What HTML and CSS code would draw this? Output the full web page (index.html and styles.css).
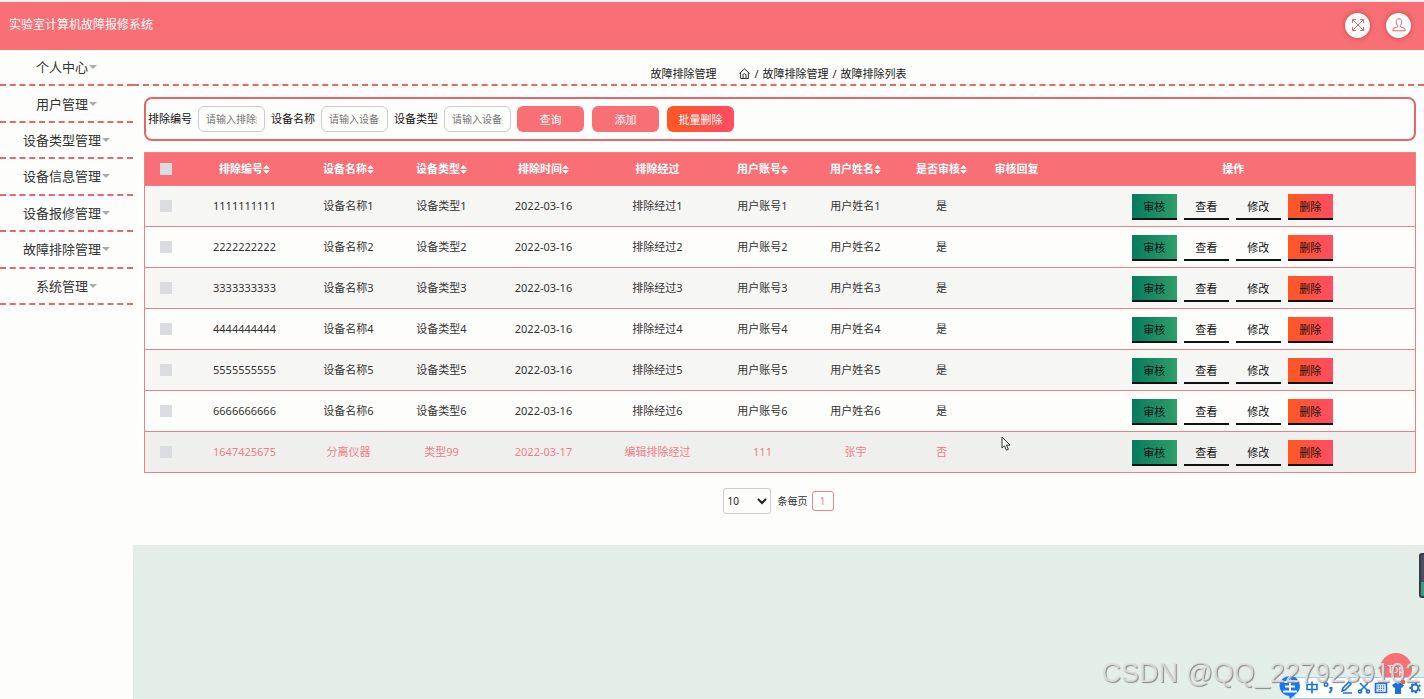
FILE: index.html
```html
<!DOCTYPE html>
<html lang="zh-CN">

<head>
    <meta charset="UTF-8">
    <meta name="viewport" content="width=device-width, initial-scale=1.0">
    <title>实验室计算机故障报修系统</title>
    <link rel="stylesheet" href="styles.css">
</head>

<body>

    <!-- Top bar -->
    <header class="header">
        <h1 class="logo">实验室计算机故障报修系统</h1>
        <div class="header-actions">
            <button class="round-button" aria-label="全屏">
                <svg width="12" height="12" viewBox="0 0 12 12">
                    <path d="M1 1l10 10M11 1L1 11M.5 4V.5H4M8 .5h3.500V4M.5 8v3.500H4M8 11.500h3.500V8" />
                </svg>
            </button>
            <button class="round-button" aria-label="用户">
                <svg width="14" height="14" viewBox="0 0 14 14">
                    <path d="M7 .8C5 .8 4.200 2 4.200 3.900c0 1.700.7 3.100 1.600 3.700v1.200L2 10.200C1.200 10.600.8 11.400.8 12.800h12.400c0-1.400-.4-2.200-1.200-2.600L8.200 8.800V7.600c.9-.6 1.600-2 1.600-3.700C9.800 2 9 .8 7 .8z" />
                </svg>
            </button>
        </div>
    </header>

    <div class="layout">
        <!-- Side menu -->
        <aside class="sidebar">
            <nav class="menu">
                <a class="menu-item" href="#">个人中心<span class="caret"></span></a>
                <a class="menu-item" href="#">用户管理<span class="caret"></span></a>
                <a class="menu-item" href="#">设备类型管理<span class="caret"></span></a>
                <a class="menu-item" href="#">设备信息管理<span class="caret"></span></a>
                <a class="menu-item" href="#">设备报修管理<span class="caret"></span></a>
                <a class="menu-item" href="#">故障排除管理<span class="caret"></span></a>
                <a class="menu-item" href="#">系统管理<span class="caret"></span></a>
            </nav>
        </aside>

        <main class="content">
            <div class="breadcrumb">
                <span class="breadcrumb-title">故障排除管理</span>
                <a class="home" href="#" aria-label="首页">
                    <svg width="11" height="11" viewBox="0 0 11 11">
                        <path d="M.5 5.500L5.500.9l5 4.600M1.600 4.700v5.800h7.800V4.700M4 10.500V6.800C4 5.400 7 5.400 7 6.800v3.700" />
                    </svg>
                </a>
                <span>/</span>
                <span>故障排除管理</span>
                <span>/</span>
                <span>故障排除列表</span>
            </div>

            <div class="panel">
                <!-- Search form -->
                <form class="filter">
                    <label for="code">排除编号</label>
                    <input class="filter-input" type="text" id="code" placeholder="请输入排除编号">
                    <label for="name">设备名称</label>
                    <input class="filter-input" type="text" id="name" placeholder="请输入设备名称">
                    <label for="type">设备类型</label>
                    <input class="filter-input" type="text" id="type" placeholder="请输入设备类型">
                    <div class="filter-buttons">
                        <button class="filter-button" type="button">查询</button>
                        <button class="filter-button" type="button">添加</button>
                        <button class="filter-button danger" type="button">批量删除</button>
                    </div>
                </form>

                <table class="table">
                    <thead>
                        <tr>
                            <th class="col-check"><input class="check" type="checkbox" aria-label="全选"></th>
                            <th class="col-code sort">排除编号</th>
                            <th class="col-name sort">设备名称</th>
                            <th class="col-type sort">设备类型</th>
                            <th class="col-date sort">排除时间</th>
                            <th class="col-note">排除经过</th>
                            <th class="col-account sort">用户账号</th>
                            <th class="col-user sort">用户姓名</th>
                            <th class="col-audit sort">是否审核</th>
                            <th class="col-reply">审核回复</th>
                            <th>操作</th>
                        </tr>
                    </thead>
                    <tbody id="rows"></tbody>
                </table>

                <!-- Pagination -->
                <div class="pager">
                    <select class="page-size" id="page-size">
                        <option>10</option>
                        <option>20</option>
                        <option>50</option>
                    </select>
                    <label for="page-size">条每页</label>
                    <button class="page-number">1</button>
                </div>
            </div>
        </main>
    </div>

    <button class="top-button">Top</button>

    <!-- Input method bar -->
    <div class="ime">
        <svg width="146" height="26" viewBox="0 0 146 26">
            <path fill="#fcfdff" stroke="#a9cbe8" d="M16 2.500H147V23.500H16z" />
            <path fill="#1677f8" d="M12 1a10 10 0 0 1 7 17l-7 6-1-3A10 10 0 0 1 12 1z" />
            <g fill="none" stroke="#1a70dc" stroke-width="1.600">
                <path stroke="#fff" stroke-width="2" d="M6 7h12M7 11.500h10M5 16.500h14M12 7v9M11 4l2 2" />
                <path d="M29 9.500h10v5H29zM34 6.500v12" />
                <circle cx="48" cy="9.500" r="1.700" />
                <path d="M51.500 13H53.500v2l-2 3" stroke-width="2" />
                <path d="M64 16l1-3 6-6 2 2-6 6zM65 18h9" />
                <path d="M82 8l8 8M90 8l-8 8" />
                <circle cx="82" cy="16.500" r="1.500" />
                <circle cx="90" cy="16.500" r="1.500" />
                <path d="M97.500 8.500h11v9h-11z" />
                <path stroke-dasharray="1.200 1" d="M98.500 11h9M98.500 13.200h9M100.500 15.500h5" />
                <circle cx="137" cy="13" r="3.400" stroke-width="2" />
                <path stroke-width="2" stroke-dasharray="2 2.400" d="M137 8l4.500 2.500v5L137 18l-4.500-2.500v-5z" />
            </g>
            <path fill="#1a70dc" d="M114 10l4-2.500c1 1.500 3 1.500 4 0l4 2.500-2 3-1-.5V19h-6v-6.500l-1 .5z" />
            <circle cx="125" cy="7" r="2.300" fill="#ff5a2b" />
        </svg>
    </div>
    <div class="watermark">CSDN @QQ_2279239102</div>
    <div class="side-tab"></div>
    <svg class="cursor" width="10" height="16" viewBox="0 0 10 16">
        <path d="M1 1v11l2.500-2.200 2 4.400 1.900-.9-2-4.200H9z" />
    </svg>

    <script src="script.js"></script>
</body>

</html>
```

FILE: styles.css
```css
/* Resetting default margin and padding for all elements */
* {
    margin: 0;
    padding: 0;
    box-sizing: border-box;
}

body {
    min-height: 100vh;
    display: flex;
    flex-direction: column;
    background: #fdfdfb;
    color: #333;
    font-family: "Noto Sans", "Noto Sans CJK SC", sans-serif;
    font-size: 11px;
    line-height: 16px;
    overflow: hidden;
}

button,
input,
select {
    font-family: inherit;
    font-size: 11px;
}

button {
    border: none;
    cursor: pointer;
}

a {
    color: inherit;
    text-decoration: none;
}

/* Top bar */
.header {
    display: flex;
    justify-content: space-between;
    align-items: center;
    height: 50px;
    padding: 0 13px 2px 9px;
    border-top: 2px solid #fdf3f1;
    background: #f86f75;
}

.logo {
    color: #fff;
    font-size: 12px;
    font-weight: normal;
}

.header-actions {
    display: flex;
    gap: 16px;
}

.round-button {
    display: flex;
    justify-content: center;
    align-items: center;
    width: 25px;
    height: 25px;
    border-radius: 50%;
    background: #fdfdfb;
    box-shadow: 0 0 5px rgba(120, 40, 40, 0.5);
}

.round-button svg {
    fill: none;
    stroke: #e0656a;
}

.layout {
    flex: 1;
    display: flex;
}

/* Side menu */
.sidebar {
    width: 133px;
}

.menu {
    display: flex;
    flex-direction: column;
    height: 255px;
}

.menu-item {
    flex: 1;
    display: flex;
    justify-content: center;
    align-items: center;
    gap: 1px;
    border-bottom: 2px dashed #e8676c;
    font-size: 13px;
}

.caret {
    border: 4px solid transparent;
    border-top-color: #aaa;
    border-bottom: none;
}

/* Main area */
.content {
    flex: 1;
    min-width: 0;
    background: #e3eee8;
}

.breadcrumb {
    display: flex;
    justify-content: center;
    align-items: flex-end;
    gap: 4px;
    height: 36px;
    padding-bottom: 2px;
    border-bottom: 2px dashed #e8676c;
    background: #fdfdfb;
    color: #222;
}

.breadcrumb-title {
    margin-right: 19px;
}

.home {
    display: flex;
    margin-bottom: 3px;
}

.home svg {
    fill: none;
    stroke: #333;
}

.panel {
    padding: 11px 8px 31px 11px;
    background: #fdfdfb;
}

/* Search form */
.filter {
    display: flex;
    align-items: center;
    gap: 6px;
    height: 44px;
    margin-bottom: 11px;
    padding: 0 2px;
    border: 2px solid #e2666b;
    border-radius: 8px;
    color: #111;
}

.filter-input {
    width: 67px;
    height: 26px;
    padding: 0 7px;
    border: 1px solid #ccc;
    border-radius: 6px;
    background: #fdfdfb;
    font-size: 10px;
}

.filter-input::placeholder {
    color: #757575;
}

.filter-buttons {
    display: flex;
    gap: 8px;
}

.filter-button {
    width: 67px;
    height: 26px;
    border-radius: 6px;
    background: #f86f75;
    color: #fff;
}

.danger {
    background: linear-gradient(90deg, #ff5722, #ff4d63);
}

/* Data table */
.table {
    width: 100%;
    table-layout: fixed;
    border-collapse: collapse;
    border: 1px solid #e88286;
    text-align: center;
}

.table th {
    height: 33px;
    background: #f86f75;
    color: #fff;
}

.table td {
    height: 41px;
    border-top: 1px solid #e88286;
}

.table tbody tr:nth-child(odd) {
    background: #f6f6f5;
}

.table tbody tr.active {
    background: #efefee;
    color: #f08085;
}

.col-check {
    width: 43px;
}

.col-code {
    width: 114px;
}

.col-name,
.col-account {
    width: 94px;
}

.col-type,
.col-user {
    width: 92px;
}

.col-date {
    width: 112px;
}

.col-note {
    width: 116px;
}

.col-audit {
    width: 80px;
}

.col-reply {
    width: 70px;
}

/* Sort arrows after the column name */
.sort::after {
    content: "";
    display: inline-block;
    width: 7px;
    height: 9px;
    vertical-align: -1px;
    background: #fff;
    clip-path: polygon(50% 0, 100% 42%, 0 42%, 0 58%, 100% 58%, 50% 100%, 0 58%, 0 42%);
}

.check {
    appearance: none;
    display: block;
    width: 12px;
    height: 12px;
    margin: 0 auto;
    background: #dadcdf;
}

.row-actions {
    display: flex;
    justify-content: center;
    gap: 7px;
    padding: 1px 2px 0 0;
}

.row-button {
    width: 45px;
    height: 26px;
    border-bottom: 2px solid #111;
    background: none;
    color: #111;
}

.row-button.audit {
    background: linear-gradient(90deg, #067a5b, #2f9e6c);
}

.row-button.danger {
    background: linear-gradient(90deg, #ff5722, #ff4d63);
}

/* Pagination */
.pager {
    display: flex;
    justify-content: center;
    align-items: center;
    margin-top: 15px;
    padding-right: 4px;
    font-size: 10px;
}

.page-size {
    width: 48px;
    height: 26px;
    margin-right: 7px;
    border: 1px solid #ccc;
    border-radius: 3px;
    background: #fdfdfb;
    color: #222;
    font-size: 10px;
}

.page-number {
    width: 22px;
    height: 20px;
    margin-left: 4px;
    border: 1px solid #ec868a;
    border-radius: 3px;
    background: #fdfdfb;
    color: #f08085;
    font-size: 10px;
}

/* Floating items */
.top-button {
    position: fixed;
    right: 12px;
    bottom: 14px;
    width: 32px;
    height: 32px;
    border-radius: 50%;
    background: #f86f75;
    color: #fff;
    font-size: 10px;
}

.ime {
    position: fixed;
    right: 0;
    bottom: -2px;
    height: 26px;
}

.watermark {
    position: fixed;
    right: 4px;
    bottom: 10px;
    color: rgba(225, 225, 225, 0.85);
    font-family: "Liberation Sans", sans-serif;
    font-size: 27px;
    line-height: 32px;
    text-shadow: 1px 1px 1px #888;
    pointer-events: none;
}

.side-tab {
    position: fixed;
    right: 0;
    top: 553px;
    width: 5px;
    height: 45px;
    border: 2px solid #333b48;
    border-right: none;
    border-radius: 3px 0 0 3px;
    background: linear-gradient(#4b505a 65%, #3f9c7c 65%);
}

.cursor {
    position: fixed;
    left: 1001px;
    top: 436px;
    fill: #fff;
    stroke: #333;
}
```

FILE: script.js
```javascript
// Table data: code, device name, device type, date, note, account, user, audited
const rows = [];
for (let i = 1; i <= 6; i++) {
    rows.push([String(i).repeat(10), '设备名称' + i, '设备类型' + i, '2022-03-16', '排除经过' + i, '用户账号' + i, '用户姓名' + i, '是']);
}
rows.push(['1647425675', '分离仪器', '类型99', '2022-03-17', '编辑排除经过', '111', '张宇', '否']);

// Fill the table body
document.getElementById('rows').innerHTML = rows.map((row, i) => `
    <tr class="${i === rows.length - 1 ? 'active' : ''}">
        <td><input class="check" type="checkbox" aria-label="选择"></td>
        ${row.map(text => `<td>${text}</td>`).join('')}
        <td></td>
        <td>
            <div class="row-actions">
                <button class="row-button audit">审核</button>
                <button class="row-button">查看</button>
                <button class="row-button">修改</button>
                <button class="row-button danger">删除</button>
            </div>
        </td>
    </tr>`).join('');
```
